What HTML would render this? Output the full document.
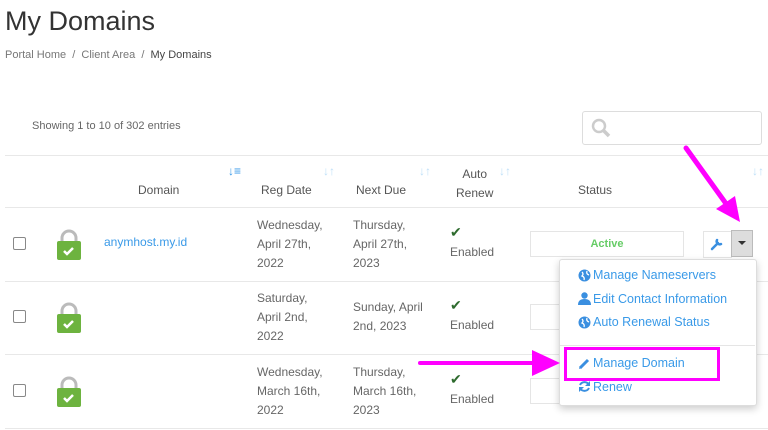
<!DOCTYPE html>
<html><head><style>
body{margin:0;width:768px;height:430px;overflow:hidden;background:#fff;font-family:"Liberation Sans",sans-serif;color:#555;position:relative}
.a{position:absolute;white-space:nowrap}
.h{font-size:12px;color:#555}
.d{font-size:12px;line-height:19px;color:#666}
.line{position:absolute;left:5px;right:0;height:1px;background:#e8e8e8}
.cb{position:absolute;left:13px;width:11px;height:11px;border:1px solid #888;border-radius:2px}
.st{position:absolute;left:530px;width:152px;height:24px;border:1px solid #e5e5e5;font-size:11px;font-weight:bold;color:#6c6;text-align:center;line-height:24px}
.mi{position:absolute;left:593px;font-size:12.5px;color:#3a9ae8}
.ic{position:absolute;left:578px}
.sort{position:absolute;font-size:12px;color:#bfe0f8;font-weight:bold}
</style></head><body>
<div class="a" style="left:5px;top:6px;font-size:27px;color:#333">My Domains</div>
<div class="a" style="left:5px;top:49px;font-size:11px;color:#777">Portal Home &nbsp;/&nbsp; Client Area &nbsp;/&nbsp; <span style="color:#444">My Domains</span></div>
<div class="a" style="left:32px;top:120px;font-size:11px;color:#666">Showing 1 to 10 of 302 entries</div>
<div class="a" style="left:582px;top:111px;width:178px;height:32px;border:1px solid #ddd;border-radius:3px"></div>
<svg class="a" style="left:590px;top:117px" width="22" height="22"><circle cx="9" cy="9" r="6" fill="none" stroke="#ccc" stroke-width="2.5"/><path d="M13 13l6 6" stroke="#ccc" stroke-width="3.5"/></svg>
<div class="line" style="top:155px"></div>
<div class="line" style="top:207px"></div>
<div class="line" style="top:281px"></div>
<div class="line" style="top:354px"></div>
<div class="line" style="top:428px"></div>
<div class="a h" style="left:138px;top:183px">Domain</div>
<div class="a h" style="left:261px;top:183px">Reg Date</div>
<div class="a h" style="left:356px;top:183px">Next Due</div>
<div class="a h" style="left:456px;top:165px;text-align:center;line-height:19px">Auto<br>Renew</div>
<div class="a h" style="left:578px;top:183px">Status</div>
<div class="sort" style="left:228px;top:164px;color:#3a9ae8">↓≡</div>
<div class="sort" style="left:323px;top:164px">↓↑</div>
<div class="sort" style="left:419px;top:164px">↓↑</div>
<div class="sort" style="left:499px;top:164px">↓↑</div>
<div class="sort" style="left:752px;top:164px">↓↑</div>

<div class="cb" style="top:237px"></div>
<div class="cb" style="top:310px"></div>
<div class="cb" style="top:384px"></div>
<svg class="a" style="left:56px;top:228px" width="26" height="34"><path d="M6 14V10a7 7 0 0 1 14 0v4" fill="none" stroke="#bbb" stroke-width="3"/><rect x="1" y="13" width="24" height="19" rx="2" fill="#6db33f"/><path d="M8 23l3 3 6-6" stroke="#fff" stroke-width="2.5" fill="none"/></svg>
<svg class="a" style="left:56px;top:301px" width="26" height="34"><path d="M6 14V10a7 7 0 0 1 14 0v4" fill="none" stroke="#bbb" stroke-width="3"/><rect x="1" y="13" width="24" height="19" rx="2" fill="#6db33f"/><path d="M8 23l3 3 6-6" stroke="#fff" stroke-width="2.5" fill="none"/></svg>
<svg class="a" style="left:56px;top:375px" width="26" height="34"><path d="M6 14V10a7 7 0 0 1 14 0v4" fill="none" stroke="#bbb" stroke-width="3"/><rect x="1" y="13" width="24" height="19" rx="2" fill="#6db33f"/><path d="M8 23l3 3 6-6" stroke="#fff" stroke-width="2.5" fill="none"/></svg>
<div class="a" style="left:104px;top:235px;font-size:12px;color:#3a9ae8">anymhost.my.id</div>
<div class="a d" style="left:257px;top:216px">Wednesday,<br>April 27th,<br>2022</div>
<div class="a d" style="left:353px;top:216px">Thursday,<br>April 27th,<br>2023</div>
<div class="a d" style="left:257px;top:289px">Saturday,<br>April 2nd,<br>2022</div>
<div class="a d" style="left:353px;top:298px">Sunday, April<br>2nd, 2023</div>
<div class="a d" style="left:257px;top:363px">Wednesday,<br>March 16th,<br>2022</div>
<div class="a d" style="left:353px;top:363px">Thursday,<br>March 16th,<br>2023</div>
<div class="a" style="left:450px;top:224px;font-size:14px;color:#2e6b2e">✔</div>
<div class="a d" style="left:450px;top:243px">Enabled</div>
<div class="a" style="left:450px;top:297px;font-size:14px;color:#2e6b2e">✔</div>
<div class="a d" style="left:450px;top:316px">Enabled</div>
<div class="a" style="left:450px;top:371px;font-size:14px;color:#2e6b2e">✔</div>
<div class="a d" style="left:450px;top:390px">Enabled</div>
<div class="st" style="top:231px">Active</div>
<div class="st" style="top:304px"></div>
<div class="st" style="top:378px"></div>
<div class="a" style="left:703px;top:231px;width:28px;height:25px;border:1px solid #e5e5e5;border-right:none"></div>
<svg class="a" style="left:710px;top:237px" width="14" height="14"><path d="M2 12l6-6M7 3a3 3 0 0 0 4 4" stroke="#3a8fe0" stroke-width="2.5" fill="none" stroke-linecap="round"/></svg>
<div class="a" style="left:731px;top:230px;width:22px;height:27px;background:#ddd;border:1px solid #bbb;box-sizing:border-box"></div>
<div class="a" style="left:738px;top:241px;width:0;height:0;border-left:4px solid transparent;border-right:4px solid transparent;border-top:4px solid #333"></div>

<div class="a" style="left:559px;top:259px;width:196px;height:145px;background:#fff;border:1px solid #ddd;border-radius:3px;box-shadow:0 3px 8px rgba(0,0,0,.2)"></div>
<div class="a" style="left:560px;top:345px;width:195px;height:1px;background:#e5e5e5"></div>
<svg class="ic" style="top:269px" width="13" height="13"><circle cx="6.5" cy="6.5" r="6" fill="#3a8fe0"/><path d="M4 3q2 2 0 4q3 1 2 4M9 2q-1 3 2 4" stroke="#fff" stroke-width="1.3" fill="none"/></svg>
<div class="mi" style="top:268px">Manage Nameservers</div>
<svg class="ic" style="top:292px" width="13" height="13"><circle cx="6.5" cy="3.5" r="3.2" fill="#3a8fe0"/><path d="M0 13q0-6 6.5-6t6.5 6z" fill="#3a8fe0"/></svg>
<div class="mi" style="top:292px">Edit Contact Information</div>
<svg class="ic" style="top:316px" width="13" height="13"><circle cx="6.5" cy="6.5" r="6" fill="#3a8fe0"/><path d="M4 3q2 2 0 4q3 1 2 4M9 2q-1 3 2 4" stroke="#fff" stroke-width="1.3" fill="none"/></svg>
<div class="mi" style="top:315px">Auto Renewal Status</div>
<svg class="ic" style="top:357px" width="13" height="13"><path d="M2 11l8-8" stroke="#3a8fe0" stroke-width="3"/><path d="M1 12l1-3 2 2z" fill="#3a8fe0"/></svg>
<div class="mi" style="top:356px">Manage Domain</div>
<svg class="ic" style="top:380px" width="13" height="13"><path d="M11 5A5 5 0 0 0 2 5M2 8a5 5 0 0 0 9 0" stroke="#3a8fe0" stroke-width="2" fill="none"/><path d="M12 1v5h-5zM1 12V7h5z" fill="#3a8fe0"/></svg>
<div class="mi" style="top:380px">Renew</div>
<div class="a" style="left:564px;top:347px;width:150px;height:28px;border:3px solid #f0f"></div>

<svg class="a" style="left:0;top:0" width="768" height="430">
<path d="M686 148L727 205" stroke="#f0f" stroke-width="5" stroke-linecap="round"/>
<polygon points="740,222 716,209 735,196" fill="#f0f"/>
<path d="M420 363L532 363" stroke="#f0f" stroke-width="4" stroke-linecap="round"/>
<polygon points="560,363 532,350 532,376" fill="#f0f"/>
</svg>
</body></html>
